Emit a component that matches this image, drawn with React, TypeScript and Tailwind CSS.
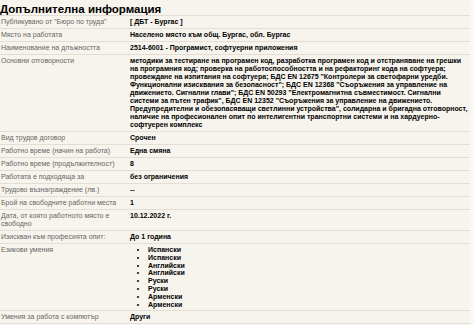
const ROWS: { label: string; value: string }[] = [
  { label: 'Публикувано от "Бюро по труда"', value: "[ ДБТ - Бургас ]" },
  { label: "Място на работата", value: "Населено място към общ. Бургас, обл. Бургас" },
  { label: "Наименование на длъжността", value: "2514-6001 - Програмист, софтуерни приложения" },
  {
    label: "Основни отговорности",
    value:
      'методики за тестиране на програмен код, разработка програмен код и отстраняване на грешки на програмния код; проверка на работоспособността и на рефакторинг кода на софтуера; провеждане на изпитания на софтуера; БДС EN 12675 "Контролери за светофарни уредби. Функционални изисквания за безопасност"; БДС EN 12368 "Съоръжения за управление на движението. Сигнални глави"; БДС EN 50293 "Електромагнитна съвместимост. Сигнални системи за пътен трафик", БДС EN 12352 "Съоръжения за управление на движението. Предупредителни и обезопасяващи светлинни устройства", солидарна и бригадна отговорност, наличие на професионален опит по интелигентни транспортни системи и на хардуерно-софтуерен комплекс',
  },
  { label: "Вид трудов договор", value: "Срочен" },
  { label: "Работно време (начин на работа)", value: "Една смяна" },
  { label: "Работно време (продължителност)", value: "8" },
  { label: "Работата е подходяща за", value: "без ограничения" },
  { label: "Трудово възнаграждение (лв.)", value: "--" },
  { label: "Брой на свободните работни места", value: "1" },
  { label: "Дата, от която работното място е свободно", value: "10.12.2022 г." },
  { label: "Изискван към професията опит:", value: "До 1 година" },
];

const LANGUAGES = ["Испански", "Испански", "Английски", "Английски", "Руски", "Руски", "Арменски", "Арменски"];

function Row({ label, children }: { label: string; children: React.ReactNode }) {
  return (
    <div className="flex border-b border-[#e2ded5] py-[2px]">
      <div className="w-[130px] shrink-0 pl-[1px] pr-[10px] text-[#666]">{label}</div>
      <div className="w-[340px] font-bold text-black">{children}</div>
    </div>
  );
}

export default function App() {
  return (
    <div className="min-h-[325px] w-[474px] bg-[#faf8f4]">
      <div
        className="w-[470px] bg-[#f7f4ed] text-[7px] leading-[8px]"
        style={{ fontFamily: '"Liberation Sans", Arial, sans-serif' }}
      >
        <h2 className="h-[16px] border-b border-[#e2ded5] pt-[2px] text-[11.5px] font-bold leading-[14px] text-black">
          Допълнителна информация
        </h2>
        {ROWS.map((r, i) => (
          <Row key={i} label={r.label}>
            {r.value}
          </Row>
        ))}
        <Row label="Езикови умения">
          <ul className="list-disc pl-[18px] leading-[7.8px]">
            {LANGUAGES.map((l, i) => (
              <li key={i}>{l}</li>
            ))}
          </ul>
        </Row>
        <Row label="Умения за работа с компютър">Други</Row>
      </div>
    </div>
  );
}
